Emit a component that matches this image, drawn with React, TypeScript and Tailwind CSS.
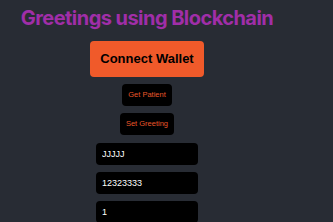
export default function App() {
  return (
    <div className="min-h-[222px] bg-[#282c34] overflow-hidden">
      <div className="w-[294px] flex flex-col items-center font-['Liberation_Sans',Arial,sans-serif]">
        <h1 className="mt-[6px] text-[20px] leading-[24px] font-bold text-[#a02ea8] whitespace-nowrap font-['Inter',sans-serif] tracking-[-0.55px]">
          Greetings using Blockchain
        </h1>
        <button className="mt-[11px] w-[114px] h-[36px] rounded-[4px] bg-[#f05a2a] text-black font-bold text-[13px]">
          Connect Wallet
        </button>
        <button className="mt-[7px] h-[22px] px-[6px] rounded-[4px] bg-black text-[#e8572a] text-[7.5px]">
          Get Patient
        </button>
        <button className="mt-[7px] h-[22px] px-[6px] rounded-[4px] bg-black text-[#e8572a] text-[7.5px]">
          Set Greeting
        </button>
        <div className="mt-[8px] flex flex-col gap-[7px]">
          {["JJJJJ", "12323333", "1"].map((v) => (
            <input
              key={v}
              readOnly
              value={v}
              className="w-[102px] h-[22px] rounded-[4px] bg-black text-white text-[9px] px-[6px] outline-none"
            />
          ))}
        </div>
      </div>
    </div>
  );
}
